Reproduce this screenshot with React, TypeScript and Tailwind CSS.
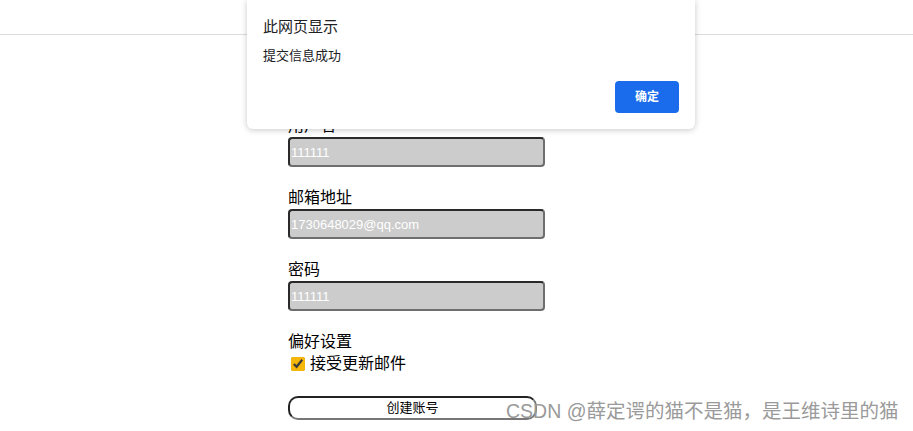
import { useState } from "react"

const FONT = "font-['Liberation_Sans','Noto_Sans_CJK_SC',sans-serif]"

function Field({ label, value }: { label: string; value: string }) {
    return (
        <div className="flex flex-col">
            <label className="text-[16px] leading-[18px] text-black">{label}</label>
            <input
                readOnly
                value={value}
                className="mt-[2px] h-[30px] w-[257px] rounded-[4px] border-2 border-[#2a2a2a] border-b-[#6e6e6e] border-r-[#6e6e6e] bg-[#cccccc] px-[1px] text-[13px] text-white outline-none"
            />
        </div>
    )
}

export default function App() {
    const [checked, setChecked] = useState(true)

    return (
        <div className={`relative h-[431px] w-[913px] overflow-hidden bg-white ${FONT}`}>
            {/* top bar */}
            <div className="h-[35px] border-b border-[#dddddd]" />

            {/* form */}
            <div className="ml-[288px] flex flex-col gap-[22px] pt-[82px]">
                <Field label="用户名" value="111111" />
                <Field label="邮箱地址" value="1730648029@qq.com" />
                <Field label="密码" value="111111" />
                <div className="flex flex-col">
                    <span className="text-[16px] leading-[18px] text-black">偏好设置</span>
                    <label className="mt-[3px] flex items-center gap-[5px] pl-[3px] text-[16px] leading-[20px] text-black">
                        <input
                            type="checkbox"
                            checked={checked}
                            onChange={(e) => setChecked(e.target.checked)}
                            className="m-0 h-[14px] w-[14px] accent-[#f5b70a]"
                        />
                        接受更新邮件
                    </label>
                </div>
                <button className="h-[24px] w-[249px] rounded-[10px] border-2 border-[#222222] border-b-[#777777] border-r-[#777777] bg-white text-[13px] text-black">
                    创建账号
                </button>
            </div>

            {/* alert dialog */}
            <div className="absolute left-[247px] top-0 flex h-[129px] w-[448px] flex-col rounded-b-[6px] bg-white px-4 shadow-[0_1px_6px_rgba(0,0,0,0.22)]">
                <div className="pt-[17px] text-[15px] leading-[20px] text-[#202124]">此网页显示</div>
                <div className="mt-[10px] text-[13px] leading-[18px] text-[#202124]">提交信息成功</div>
                <div className="mt-auto mb-[16px] flex justify-end">
                    <button className="h-[32px] w-[64px] rounded-[4px] bg-[#1a6cec] text-[12px] font-bold text-white">
                        确定
                    </button>
                </div>
            </div>

            {/* watermark */}
            <div className="absolute left-[506px] top-[399px] text-[19.5px] leading-[24px] text-[#9a9a9a]">
                CSDN @薛定谔的猫不是猫，是王维诗里的猫
            </div>
        </div>
    )
}
